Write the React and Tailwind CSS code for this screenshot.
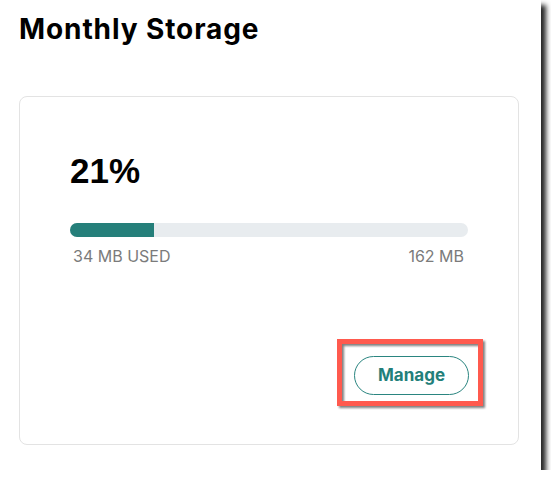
const usedPercent = 21;

const StorageCard = () => {
  return (
    <div className="mt-[53px] flex h-[349px] w-[500px] flex-col rounded-lg border border-[#e3e3e3] bg-white px-[50px] pt-[56px]">
      <div className="font-['Liberation_Sans',Arial,sans-serif] text-[35px] font-bold leading-none text-black">
        {usedPercent}%
      </div>

      <div className="mt-[35px] h-[14px] w-full overflow-hidden rounded-full bg-[#e8ecef]">
        <div
          className="h-full bg-[#257f7a]"
          style={{ width: `${usedPercent + 0.1}%` }}
        />
      </div>

      <div className="mt-[9px] flex justify-between pl-[3px] pr-[4px] font-['Inter',sans-serif] text-[16px] leading-5 text-[#7b7b7b]">
        <span>34 MB USED</span>
        <span>162 MB</span>
      </div>

      <div className="relative mb-[38px] mr-[-15px] mt-auto self-end pb-[11px] pl-[17px] pr-[14px] pt-[17px]">
        {/* annotation frame round the button */}
        <div className="pointer-events-none absolute inset-0 border-[5px] border-[#ff5a4e] drop-shadow-[2px_2px_1px_rgba(0,0,0,0.5)]" />
        <button className="flex h-[39px] w-[115px] items-center justify-center rounded-full border border-[#2a8580] bg-white font-['Inter',sans-serif] text-[17px] font-bold text-[#237f7a]">
          Manage
        </button>
      </div>
    </div>
  );
};

const App = () => {
  return (
    <div className="h-[470px] w-[541px] bg-white pl-[19px] pt-[15px] shadow-[5px_5px_5px_rgba(0,0,0,0.85)]">
      <h1 className="font-['Inter',sans-serif] text-[28px] font-bold leading-none tracking-[0.9px] text-black">
        Monthly Storage
      </h1>
      <StorageCard />
    </div>
  );
};

export default App;
